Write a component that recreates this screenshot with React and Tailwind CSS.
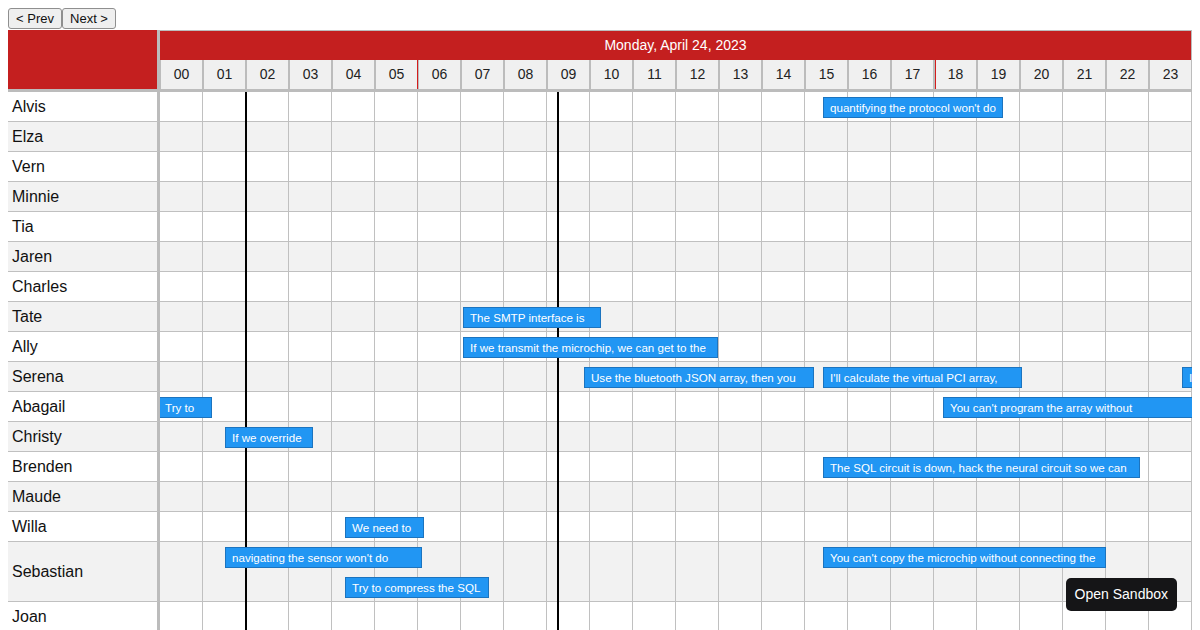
import React from 'react';

const HOURS = Array.from({ length: 24 }, (_, i) => String(i).padStart(2, '0'));

// events: left/width in px from the start of the hour grid, lane = row lane
const ROWS = [
  { name: 'Alvis', events: [{ l: 663, w: 180, text: "quantifying the protocol won't do" }] },
  { name: 'Elza', events: [] },
  { name: 'Vern', events: [] },
  { name: 'Minnie', events: [] },
  { name: 'Tia', events: [] },
  { name: 'Jaren', events: [] },
  { name: 'Charles', events: [] },
  { name: 'Tate', events: [{ l: 303, w: 138, text: 'The SMTP interface is' }] },
  { name: 'Ally', events: [{ l: 303, w: 255, text: 'If we transmit the microchip, we can get to the' }] },
  {
    name: 'Serena',
    events: [
      { l: 424, w: 230, text: 'Use the bluetooth JSON array, then you' },
      { l: 663, w: 199, text: "I'll calculate the virtual PCI array," },
      { l: 1022, w: 200, text: "I'll index the mobile feed" },
    ],
  },
  {
    name: 'Abagail',
    events: [
      { l: -2, w: 54, text: 'Try to' },
      { l: 783, w: 280, text: "You can't program the array without" },
    ],
  },
  { name: 'Christy', events: [{ l: 65, w: 88, text: 'If we override' }] },
  { name: 'Brenden', events: [{ l: 663, w: 317, text: 'The SQL circuit is down, hack the neural circuit so we can' }] },
  { name: 'Maude', events: [] },
  { name: 'Willa', events: [{ l: 185, w: 79, text: 'We need to' }] },
  {
    name: 'Sebastian',
    lanes: 2,
    events: [
      { l: 65, w: 197, text: "navigating the sensor won't do" },
      { l: 663, w: 283, text: "You can't copy the microchip without connecting the" },
      { l: 185, w: 144, lane: 1, text: 'Try to compress the SQL' },
    ],
  },
  { name: 'Joan', events: [] },
];

const Event = ({ l, w, lane = 0, text }) => (
  <div
    className="absolute z-10 h-[21px] bg-[#2196f3] border border-[#1c74bf] text-white text-[11.6px] leading-[20px] pl-[6px] whitespace-nowrap overflow-hidden"
    style={{ left: l, width: w, top: 5 + lane * 30 }}
  >
    {text}
  </div>
);

const Row = ({ row, index }) => {
  const bg = index % 2 === 1 ? 'bg-[#f2f2f2]' : 'bg-white';
  const height = row.lanes === 2 ? 'h-[60px]' : 'h-[30px]';
  return (
    <div className={`flex ${height} ${bg}`}>
      <div className="w-[152px] shrink-0 flex items-center pl-1 pt-px text-[16px] text-[#111] border-b border-[#c0c0c0] border-r-[3px] border-r-[#bcbcbc]">
        {row.name}
      </div>
      <div className="relative flex w-[1032px] overflow-hidden">
        {HOURS.map((h) => (
          <div key={h} className="w-[43px] shrink-0 h-full border-r border-b border-[#c0c0c0]" />
        ))}
        {row.events.map((ev, i) => (
          <Event key={i} {...ev} />
        ))}
      </div>
    </div>
  );
};

export default function App() {
  return (
    <div className="min-h-screen bg-white p-2 text-[#111]" style={{ fontFamily: '"Liberation Sans", Arial, sans-serif' }}>
      {/* nav buttons */}
      <div className="flex h-[22px]">
        <button className="h-[21px] w-[54px] text-[13px] bg-[#efefef] border border-[#8f8f8f] rounded-[3px]">
          &lt; Prev
        </button>
        <button className="h-[21px] w-[54px] text-[13px] bg-[#efefef] border border-[#8f8f8f] rounded-[3px]">
          Next &gt;
        </button>
      </div>

      {/* header */}
      <div className="flex w-[1184px] border-b-[3px] border-[#bcbcbc]">
        <div className="w-[152px] shrink-0 bg-[#c41f1f] border-r-[3px] border-[#bcbcbc]" />
        <div className="relative w-[1032px] border-t border-r border-[#bcbcbc]">
          <div className="h-[29px] bg-[#c41f1f] flex items-center justify-center text-white text-[14px]">
            Monday, April 24, 2023
          </div>
          <div className="flex h-[29px] bg-[#f0f0f0]">
            {HOURS.map((h) => (
              <div
                key={h}
                className="w-[43px] shrink-0 flex items-center justify-center text-[14px] text-[#222] border-x border-[#bcbcbc]"
              >
                {h}
              </div>
            ))}
          </div>
          <div className="absolute left-[257px] top-[29px] h-[29px] w-px bg-[#d41c1c]" />
          <div className="absolute left-[775px] top-[29px] h-[29px] w-px bg-[#d41c1c]" />
        </div>
      </div>

      {/* body */}
      <div className="relative w-[1184px]">
        {ROWS.map((row, i) => (
          <Row key={row.name} row={row} index={i} />
        ))}
        <div className="absolute top-0 bottom-0 left-[237px] w-[2px] bg-black" />
        <div className="absolute top-0 bottom-0 left-[549px] w-[2px] bg-black" />
      </div>

      <button className="fixed right-[23px] bottom-[19px] h-[33px] px-[9px] bg-[#151517] text-white text-[14px] rounded-[5px] z-20">
        Open Sandbox
      </button>
    </div>
  );
}
